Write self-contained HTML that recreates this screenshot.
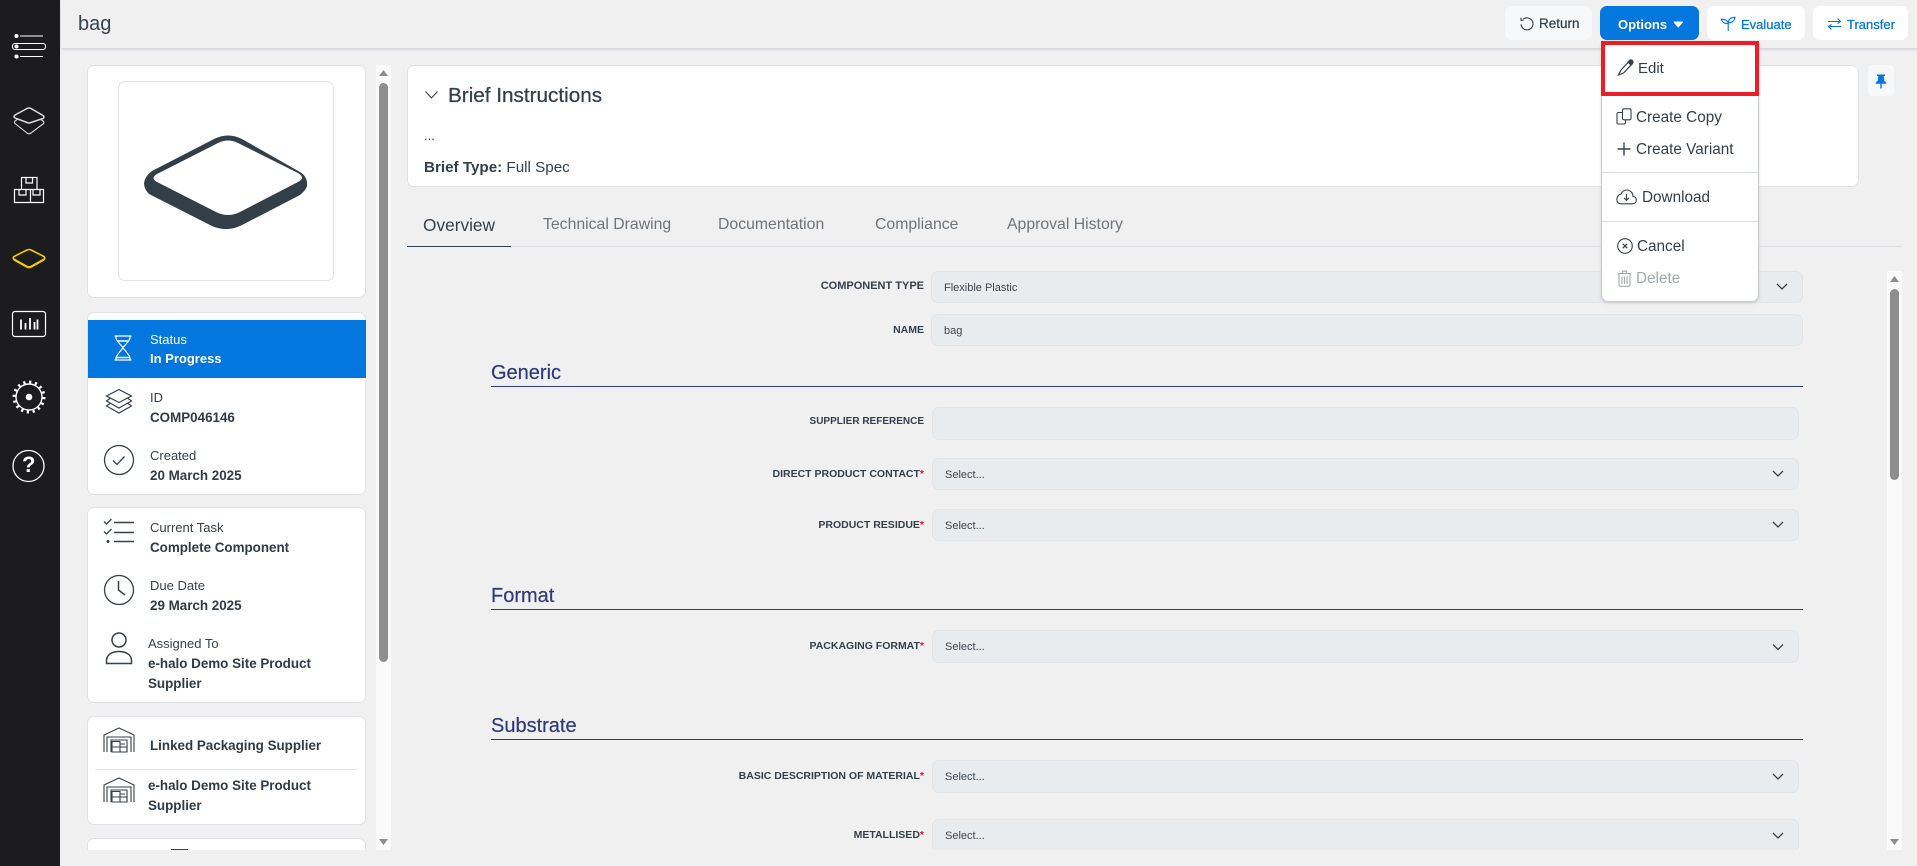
<!DOCTYPE html>
<html lang="en">
<head>
<meta charset="utf-8">
<title>bag</title>
<style>
*{box-sizing:border-box}
html,body{margin:0;padding:0}
body{width:1917px;height:866px;overflow:hidden;background:#f0f0f0;font-family:"Liberation Sans",Arial,sans-serif;color:#343f4b;position:relative}
div,span,svg{position:absolute}
.t{white-space:nowrap;line-height:20px;height:20px;margin-top:-9px}
.c{font-size:13px;color:#35414d}
.b{font-size:13.4px;font-weight:bold;color:#2f3b47}
.card{background:#fff;border:1px solid #dfe2e6;border-radius:7px}
.f{background:#e9ecef;border:1px solid #e1e4e8;border-radius:7px}
.l{font-size:10.5px;font-weight:bold;color:#343f4b;text-align:right;left:500px;width:424px}
.l i{color:#e0103c;font-style:normal}
.s{font-size:11px;color:#3c4650;left:945px}
.h{font-size:20px;color:#2f3a7b;left:491px;-webkit-text-stroke:.2px #2f3a7b}
.r{left:491px;width:1312px;height:1px;background:#2f3a7b}
.tab{font-size:15.8px;color:#6c757d}
.btn{top:6px;height:34px;border-radius:7px;background:#fff}
.m{font-size:15.3px;color:#343f4b}
.sep{left:1602px;width:156px;height:1px;background:#dcdfe3}
</style>
</head>
<body>

<!-- sidebar -->
<div style="left:0;top:0;width:60px;height:866px;background:#1c1c1e"></div>
<svg style="left:0;top:0" width="60" height="500" viewBox="0 0 60 500" fill="none" stroke="#fff">
  <g stroke-width="1.1">
    <circle cx="16.5" cy="36" r="1.5" fill="#fff"/><path d="M20 36H43"/>
    <rect x="12.5" y="43.5" width="33" height="6" rx="2.5"/><circle cx="16.5" cy="46.5" r="1.5" fill="#fff"/>
    <circle cx="16.5" cy="56.5" r="1.5" fill="#fff"/><path d="M20 56.5H43"/>
  </g>
  <g stroke="#ddd" stroke-width="1.1">
    <path d="M27 108.5Q29 107.500 31 108.500L43 115.500Q45 117 43 118.500L31 122.500Q29 123.500 27 122.500L15 118Q13 116.500 15 115Z" stroke-width="1.500"/>
    <path d="M18 119L15 121Q14 122.500 15 123.500L27 133Q29 134.500 31 133L43 124Q45 122.500 43 121L40 119"/>
  </g>
  <g stroke-width="1.2">
    <path d="M21.500 189V177.500H37V189M26 177.500V183H32.500V177.500"/>
    <path d="M14.500 189.500H30.500V202.500H14.500ZM19 189.500V195H26V189.500"/>
    <path d="M30.500 189.500H43.500V202.500H31M33 189.500V195H40V189.500"/>
  </g>
  <path d="M27 250Q29 249 31 250L44 256.500Q45.500 258 44 259.500L31 266.500Q29 267.500 27 266.500L14 259.500Q12.500 258 14 256.500Z" stroke="#f4c900" stroke-width="1.6"/>
  <path d="M14 259.500L27 266.800Q29 267.800 31 266.800L44 259.500" stroke="#f4c900" stroke-width="2.200"/>
  <rect x="12.500" y="311.500" width="33" height="25" rx="2.500" stroke-width="1.200"/>
  <path d="M21 319.500V329.500M25.500 323V329.500M30 318V329.500M34.500 322V329.500M37.500 319.500V329.500" stroke-width="1.800"/>
  <circle cx="29" cy="397" r="13" stroke-width="1.400"/>
  <circle cx="29" cy="397" r="3.300" fill="#fff" stroke="none"/>
  <circle cx="29" cy="397" r="15" stroke-width="3" stroke-dasharray="2.200 3.690"/>
  <circle cx="28.500" cy="466" r="15.500" stroke-width="1.300"/>
</svg>
<div class="t" style="left:22px;top:465px;font-size:22px;font-weight:bold;color:#fff;margin-top:-10px">?</div>

<!-- top bar -->
<div style="left:61px;top:0;width:1856px;height:48px;background:#f0f0f0;box-shadow:0 1px 3px rgba(120,130,150,.35)"></div>
<div class="t" style="left:78px;top:23px;font-size:20px;color:#35434f">bag</div>

<div class="btn" style="left:1505px;width:87px;background:#f6f8fa"></div>
<svg style="left:1519px;top:16px" width="16" height="16" viewBox="0 0 16 16" fill="none" stroke="#35414d" stroke-width="1.100"><path d="M4.200 3.200A6 6 0 1 1 2 8.300M2 1.800V4.200H4.500"/></svg>
<div class="t" style="left:1539px;top:23px;font-size:13.500px;color:#35414d;-webkit-text-stroke:.2px #35414d">Return</div>

<div class="btn" style="left:1600px;width:99px;background:#0477df"></div>
<div class="t" style="left:1618px;top:24px;font-size:13px;font-weight:bold;color:#fff">Options</div>
<svg style="left:1673px;top:21px" width="11" height="7" viewBox="0 0 11 7"><path d="M1 1H9.500L5.300 6Z" fill="#fff" stroke="#fff" stroke-linejoin="round"/></svg>

<div class="btn" style="left:1707px;width:98px"></div>
<svg style="left:1720px;top:16px" width="17" height="16" viewBox="0 0 17 16" fill="none" stroke="#0477df" stroke-width="1.100"><path d="M8.200 15V7.500C8 4.500 4.800 3 1.500 3.200C1.800 6 4.500 8 8.200 7.500M8.200 6.500C8.500 3.500 11 1.500 15 1.200C14.800 4.500 12 7 8.400 6.800"/></svg>
<div class="t" style="left:1741px;top:24px;font-size:13px;color:#0477df;-webkit-text-stroke:.25px #0477df">Evaluate</div>

<div class="btn" style="left:1813px;width:95px"></div>
<svg style="left:1827px;top:17px" width="15" height="14" viewBox="0 0 15 14" fill="none" stroke="#0477df" stroke-width="1.100"><path d="M1 4.500H13.500M10.500 1.500L13.500 4.500L10.500 6.500M14 9.500H1.500M4.500 7.500L1.500 9.500L4.500 12.500"/></svg>
<div class="t" style="left:1847px;top:24px;font-size:13px;color:#0477df;-webkit-text-stroke:.25px #0477df">Transfer</div>

<!-- left panel -->
<div style="left:61px;top:48px;width:340px;height:802px;overflow:hidden">
  <div class="card" style="left:26px;top:17px;width:279px;height:233px"></div>
  <div style="left:57px;top:33px;width:216px;height:200px;border:1px solid #e0e3e7;border-radius:7px;background:#fff"></div>
  <div class="card" style="left:26px;top:264px;width:279px;height:183px"></div>
  <div style="left:27px;top:272px;width:278px;height:58px;background:#0477df"></div>
  <div class="card" style="left:26px;top:459px;width:279px;height:196px"></div>
  <div class="card" style="left:26px;top:668px;width:279px;height:109px"></div>
  <div style="left:34px;top:721px;width:262px;height:1px;background:#e4e6e9"></div>
  <div class="card" style="left:26px;top:790px;width:279px;height:60px"></div>
  <div style="left:110px;top:801px;width:17px;height:1px;background:#3a4652"></div>
</div>

<svg style="left:118px;top:82px" width="216" height="200" viewBox="118 82 216 200">
  <path d="M214 139Q228 132 242 139L300 172Q308 177 307 186Q306 190 300 195L244 224Q228 233 212 226L149 194Q144 189 144 183Q145 176 152 171Z" fill="#323e48"/>
  <path d="M218 143Q228 138 238 143L298 173Q306 178 298 182L240 212Q228 218 216 212L157 182Q150 178 157 174Z" fill="#fff"/>
</svg>

<!-- status card -->
<svg style="left:113px;top:335px" width="20" height="26" viewBox="0 0 20 26" fill="none" stroke="#fff" stroke-width="1.200">
  <path d="M1.500 1H18.500M1.500 25H18.500M3 1V3Q3 5 10 12.500Q17 5 17 3V1M3 25V23Q3 21 10 13Q17 21 17 23V25"/>
  <path d="M3 22.500H17M5 6H15" stroke-width="1.500"/>
</svg>
<div class="t c" style="left:150px;top:339px;color:#fff">Status</div>
<div class="t b" style="left:150px;top:358px;color:#fff;font-size:13px">In Progress</div>

<svg style="left:105px;top:388px" width="28" height="28" viewBox="0 0 28 28" fill="none" stroke="#35414d" stroke-width="1.200">
  <path d="M14 1.500L26.500 8L14 14.500L1.500 8ZM5 10.500L1.500 13L14 20L26.500 13L23 10.500M5 15.500L1.500 18L14 25L26.500 18L23 15.500"/>
</svg>
<div class="t c" style="left:150px;top:397px">ID</div>
<div class="t b" style="left:150px;top:417px">COMP046146</div>

<svg style="left:103px;top:444px" width="32" height="32" viewBox="0 0 32 32" fill="none" stroke="#35414d" stroke-width="1.300"><circle cx="16" cy="16" r="14.500"/><path d="M10 16.500L14 20.500L21.500 12.500"/></svg>
<div class="t c" style="left:150px;top:455px">Created</div>
<div class="t b" style="left:150px;top:475px">20 March 2025</div>

<!-- task card -->
<svg style="left:103px;top:518px" width="32" height="28" viewBox="0 0 32 28" fill="none" stroke="#35414d" stroke-width="1.300">
  <path d="M1 3.500L3.500 6L8.500 1M1 13.500L3.500 16L8.500 11"/>
  <circle cx="5" cy="23.500" r="1.500" fill="#35414d" stroke="none"/>
  <path d="M11 4.500H31M11 14.500H31M11 23.500H31" stroke-width="1.600"/>
</svg>
<div class="t c" style="left:150px;top:527px">Current Task</div>
<div class="t b" style="left:150px;top:547px">Complete Component</div>

<svg style="left:103px;top:574px" width="32" height="32" viewBox="0 0 32 32" fill="none" stroke="#35414d" stroke-width="1.300"><circle cx="16" cy="16" r="14.500"/><path d="M15.500 7V16L22 21" stroke-width="1.500"/></svg>
<div class="t c" style="left:150px;top:585px">Due Date</div>
<div class="t b" style="left:150px;top:605px">29 March 2025</div>

<svg style="left:105px;top:632px" width="28" height="33" viewBox="0 0 28 33" fill="none" stroke="#35414d" stroke-width="1.500"><circle cx="14" cy="8" r="7"/><path d="M1.500 31.500V28C2 22 8 19.500 14 19.500C20 19.500 26 22 26.500 28V31.500Z"/></svg>
<div class="t c" style="left:148px;top:643px">Assigned To</div>
<div class="t b" style="left:148px;top:663px">e-halo Demo Site Product</div>
<div class="t b" style="left:148px;top:683px">Supplier</div>

<!-- supplier card -->
<svg style="left:103px;top:727px" width="32" height="26" viewBox="0 0 32 26" fill="none" stroke="#35414d" stroke-width="1.100">
  <path d="M1 25V8L16 1L31 8V25M4 25V10H28V25M8 25V13H24V25"/>
  <path d="M9 14.500H17V25H9ZM9 20H24V25H17M17 20V17H22"/>
</svg>
<div class="t b" style="left:150px;top:745px">Linked Packaging Supplier</div>
<svg style="left:103px;top:777px" width="32" height="26" viewBox="0 0 32 26" fill="none" stroke="#35414d" stroke-width="1.100">
  <path d="M1 25V8L16 1L31 8V25M4 25V10H28V25M8 25V13H24V25"/>
  <path d="M9 14.500H17V25H9ZM9 20H24V25H17M17 20V17H22"/>
</svg>
<div class="t b" style="left:148px;top:785px">e-halo Demo Site Product</div>
<div class="t b" style="left:148px;top:805px">Supplier</div>

<!-- left scrollbar -->
<div style="left:376px;top:65px;width:15px;height:785px;background:#fafafa"></div>
<div style="left:379px;top:83px;width:9px;height:579px;background:#8e8e8e;border-radius:5px"></div>
<svg style="left:376px;top:65px" width="15" height="785" viewBox="0 0 15 785" fill="#8e8e8e"><path d="M7.500 5L12 11H3Z"/><path d="M3 774H12L7.500 780Z"/></svg>

<!-- brief card -->
<div class="card" style="left:407px;top:65px;width:1452px;height:122px"></div>
<svg style="left:424px;top:90px" width="15" height="10" viewBox="0 0 15 10" fill="none" stroke="#35414d" stroke-width="1.100"><path d="M1.500 1.500L7.500 8L13.500 1.500"/></svg>
<div class="t" style="left:448px;top:95px;font-size:20.7px;color:#33404c;-webkit-text-stroke:.25px #33404c">Brief Instructions</div>
<div class="t" style="left:424px;top:135px;font-size:13px;color:#33404c">...</div>
<div class="t" style="left:424px;top:167px;font-size:15.2px;color:#33404c"><b>Brief Type:</b> Full Spec</div>

<div style="left:1868px;top:65px;width:26px;height:31px;background:#f6f8fa;border-radius:4px"></div>
<svg style="left:1874px;top:74px" width="14" height="15" viewBox="0 0 14 15" fill="#0477df"><path d="M3 0.500H11V2H9.700L10.300 7C11.500 7.500 12.300 8.500 12.500 9.800H1.500C1.700 8.500 2.500 7.500 3.700 7L4.300 2H3ZM6.300 9.800H7.700V14.500H6.300Z"/></svg>

<!-- tabs -->
<div class="t" style="left:423px;top:224px;font-size:17.3px;color:#33404c">Overview</div>
<div class="t tab" style="left:543px;top:224px">Technical Drawing</div>
<div class="t tab" style="left:718px;top:224px">Documentation</div>
<div class="t tab" style="left:875px;top:224px">Compliance</div>
<div class="t tab" style="left:1007px;top:224px">Approval History</div>
<div style="left:407px;top:246px;width:1495px;height:1px;background:#dcdfe3"></div>
<div style="left:407px;top:246px;width:104px;height:1px;background:#33404c"></div>

<!-- form -->
<div style="left:400px;top:250px;width:1500px;height:600px;overflow:hidden">
  <div class="f" style="left:531px;top:21px;width:872px;height:32px"></div>
  <div class="f" style="left:531px;top:64px;width:872px;height:32px"></div>
  <div class="f" style="left:532px;top:157px;width:867px;height:33px"></div>
  <div class="f" style="left:532px;top:208px;width:867px;height:32px"></div>
  <div class="f" style="left:532px;top:259px;width:867px;height:32px"></div>
  <div class="f" style="left:532px;top:380px;width:867px;height:33px"></div>
  <div class="f" style="left:532px;top:510px;width:867px;height:33px"></div>
  <div class="f" style="left:532px;top:569px;width:867px;height:33px"></div>
</div>

<div class="t l" style="top:285px;font-size:11px">COMPONENT TYPE</div>
<div class="t s" style="top:287px;left:944px">Flexible Plastic</div>
<div class="t l" style="top:329px">NAME</div>
<div class="t s" style="top:330px;left:944px">bag</div>

<div class="t h" style="top:372px">Generic</div>
<div class="r" style="top:386px"></div>
<div class="t l" style="top:421px;font-size:10px">SUPPLIER REFERENCE</div>
<div class="t l" style="top:473px">DIRECT PRODUCT CONTACT<i>*</i></div>
<div class="t s" style="top:474px">Select...</div>
<div class="t l" style="top:524px">PRODUCT RESIDUE<i>*</i></div>
<div class="t s" style="top:525px">Select...</div>

<div class="t h" style="top:595px">Format</div>
<div class="r" style="top:609px"></div>
<div class="t l" style="top:645px">PACKAGING FORMAT<i>*</i></div>
<div class="t s" style="top:646px">Select...</div>

<div class="t h" style="top:725px">Substrate</div>
<div class="r" style="top:739px"></div>
<div class="t l" style="top:775px">BASIC DESCRIPTION OF MATERIAL<i>*</i></div>
<div class="t s" style="top:776px">Select...</div>
<div class="t l" style="top:834px">METALLISED<i>*</i></div>
<div class="t s" style="top:835px">Select...</div>

<svg style="left:1770px;top:270px" width="20" height="580" viewBox="1770 270 20 580" fill="none" stroke="#3a3f45" stroke-width="1.300">
  <path d="M1777 284L1782 289L1787 284"/>
  <path d="M1773 471L1778 476L1783 471"/>
  <path d="M1773 522L1778 527L1783 522"/>
  <path d="M1773 644.500L1778 649.500L1783 644.500"/>
  <path d="M1773 774L1778 779L1783 774"/>
  <path d="M1773 833L1778 838L1783 833"/>
</svg>

<!-- right scrollbar -->
<div style="left:1887px;top:271px;width:15px;height:579px;background:#fafafa"></div>
<div style="left:1890px;top:289px;width:9px;height:191px;background:#8e8e8e;border-radius:5px"></div>
<svg style="left:1887px;top:271px" width="15" height="579" viewBox="0 0 15 579" fill="#8e8e8e"><path d="M7.500 5L12 11H3Z"/><path d="M3 568H12L7.500 574Z"/></svg>

<!-- dropdown -->
<div style="left:1601px;top:41px;width:158px;height:261px;background:#fff;border:1px solid #c9ccd0;border-radius:0 0 7px 7px;box-shadow:0 1px 3px rgba(0,0,0,.12)"></div>
<div style="left:1601px;top:41px;width:158px;height:55px;border:4px solid #ee1c25"></div>

<svg style="left:1617px;top:59px" width="17" height="17" viewBox="0 0 17 17" fill="none" stroke="#35414d" stroke-width="1.200"><path d="M4 11L12 2.500L15 5L6.500 14L1.500 16Z"/><path d="M11 3L13 1Q14.500 .5 15.700 2Q16.500 3.200 15.500 4.500L14 6Z" fill="#35414d"/></svg>
<div class="t m" style="left:1638px;top:68px;font-size:15px">Edit</div>

<svg style="left:1616px;top:108px" width="16" height="17" viewBox="0 0 16 17" fill="none" stroke="#35414d" stroke-width="1.100"><rect x="6.500" y="0.800" width="8.500" height="11" rx="1.500"/><path d="M6.500 4.500H2.500Q1 4.500 1 6V15Q1 16 2.500 16H8Q9.500 16 9.500 14.500V12"/></svg>
<div class="t m" style="left:1636px;top:117px">Create Copy</div>

<svg style="left:1617px;top:142px" width="14" height="14" viewBox="0 0 14 14" fill="none" stroke="#35414d" stroke-width="1.400"><path d="M7 0.500V13.500M0.500 7H13.500"/></svg>
<div class="t m" style="left:1636px;top:149px">Create Variant</div>

<div class="sep" style="top:172px"></div>

<svg style="left:1616px;top:189px" width="21" height="16" viewBox="0 0 21 16" fill="none" stroke="#35414d" stroke-width="1.100"><path d="M5 14.800H16.500C19 14.800 20.300 13 20.300 11C20.300 9 19 7.700 17 7.500C16.800 3.500 14 1 10.800 1C8 1 6 2.800 5 5C2.500 5.500 0.800 8 0.800 10.500C0.800 13 2.500 14.800 5 14.800Z"/><path d="M10.500 5V11M8 8.800L10.500 11.300L13 8.800"/></svg>
<div class="t m" style="left:1642px;top:197px">Download</div>

<div class="sep" style="top:221px"></div>

<svg style="left:1617px;top:238px" width="16" height="16" viewBox="0 0 16 16" fill="none" stroke="#35414d" stroke-width="1.100"><circle cx="8" cy="8" r="7.300"/><path d="M5.800 5.800L10.200 10.200M10.200 5.800L5.800 10.200" stroke-width="1.300"/></svg>
<div class="t m" style="left:1637px;top:246px">Cancel</div>

<svg style="left:1617px;top:270px" width="15" height="17" viewBox="0 0 15 17" fill="none" stroke="#a4a9ae" stroke-width="1.100"><path d="M1 3.500H14M5.500 3.500V1.200H9.500V3.500M2 3.500V15Q2 16.300 3.500 16.300H11.500Q13 16.300 13 15V3.500M5 6.500V14M7.500 6.500V14M10 6.500V14"/></svg>
<div class="t m" style="left:1636px;top:278px;color:#a4a9ae">Delete</div>

</body>
</html>
